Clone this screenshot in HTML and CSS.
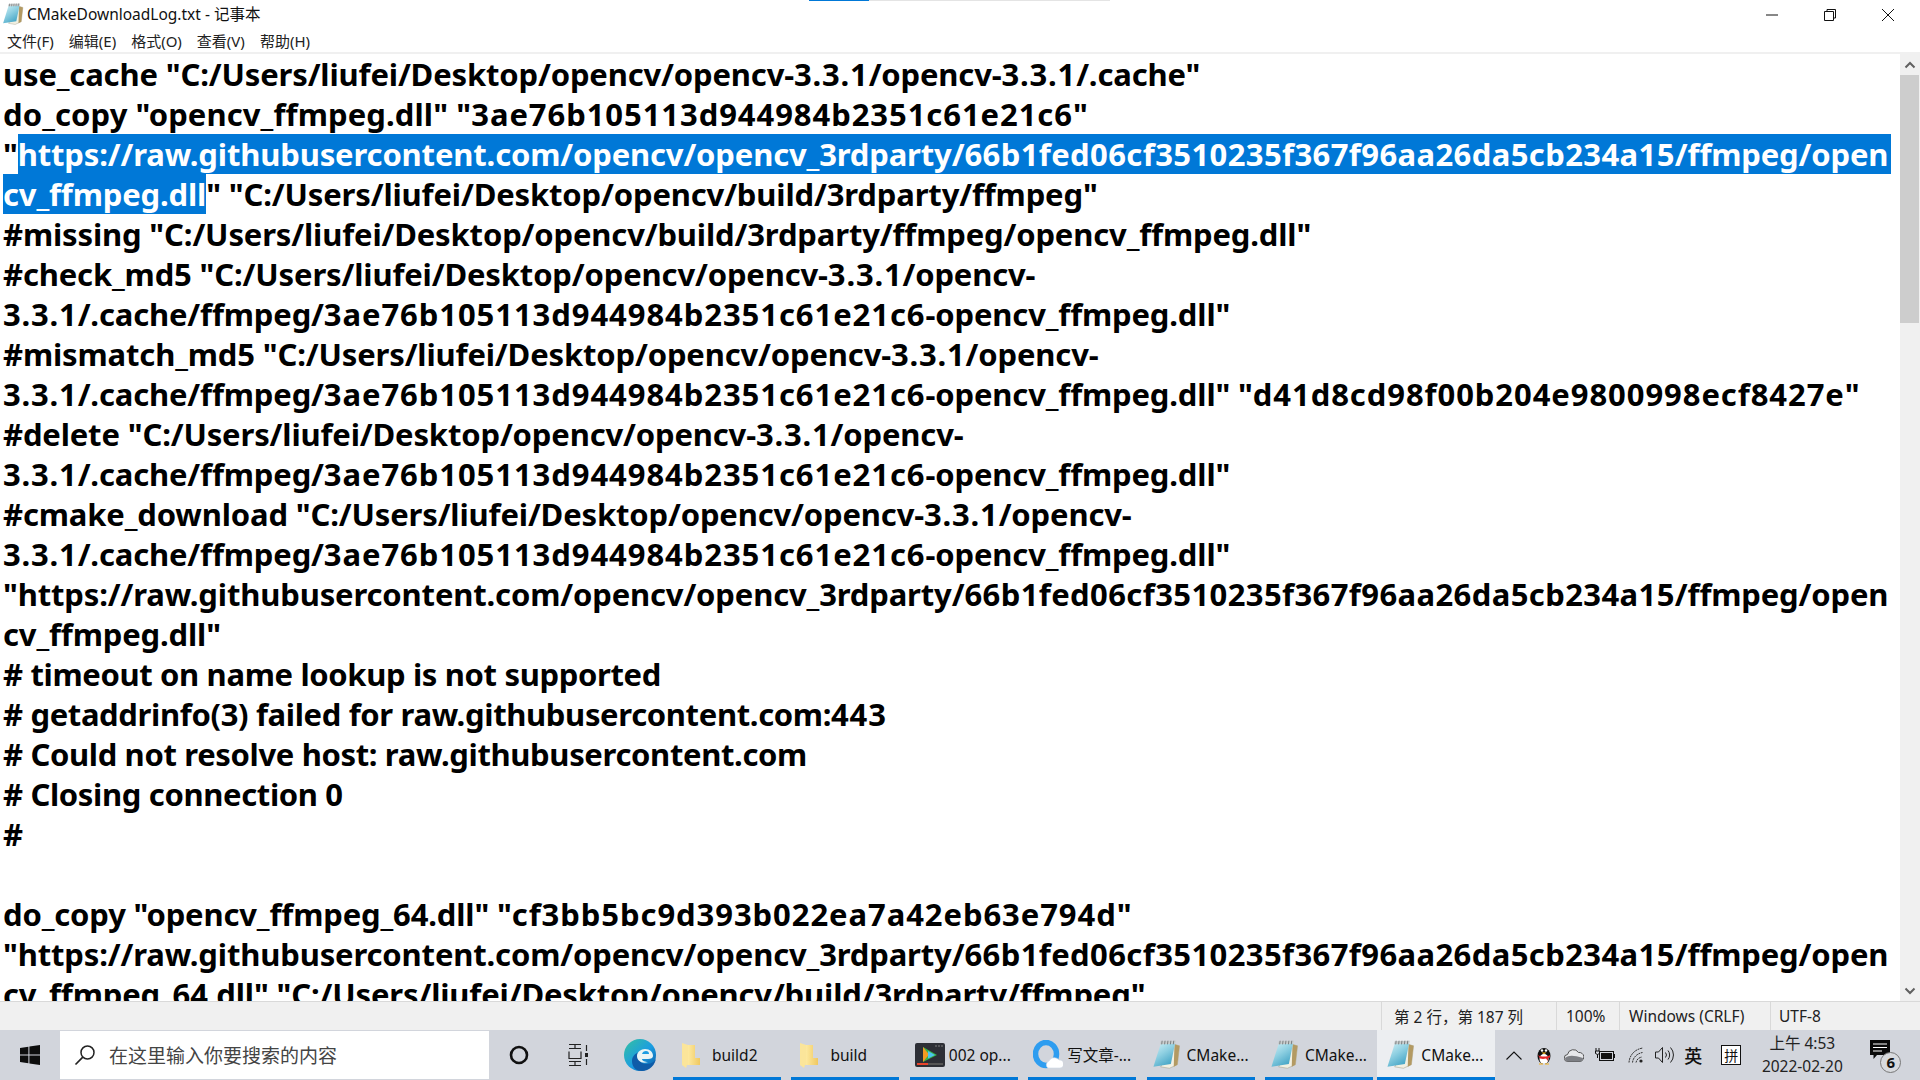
FILE: index.html
```html
<!DOCTYPE html>
<html lang="zh">
<head>
<meta charset="utf-8">
<title>CMakeDownloadLog.txt - 记事本</title>
<link rel="stylesheet" href="styles.css">
</head>
<body>
<div class="progress"><span class="progress-fill"></span></div>
<header class="titlebar">
  <svg class="app-icon" viewBox="0 0 20 20"><use href="#notepad"/></svg>
  <span class="title">CMakeDownloadLog.txt - 记事本</span>
  <div class="winctl">
    <svg width="14" height="14" viewBox="0 0 14 14"><path d="M1 7h12" stroke="#111" stroke-width="1"/></svg>
    <svg width="14" height="14" viewBox="0 0 14 14"><path d="M1.500 3.500h9v9h-9zM4 3.500V1.500h8.500v8.500h-2" fill="none" stroke="#111"/></svg>
    <svg width="14" height="14" viewBox="0 0 14 14"><path d="M1 1l12 12M13 1L1 13" stroke="#111" fill="none"/></svg>
  </div>
</header>
<nav class="menubar">
  <span>文件(F)</span><span>编辑(E)</span><span>格式(O)</span><span>查看(V)</span><span>帮助(H)</span>
</nav>
<main class="editor">
  <div class="text">
    <div class="line">use_cache "C:/Users/liufei/Desktop/opencv/opencv-<span class="ver">3.3.1</span>/opencv-<span class="ver">3.3.1</span>/.cache"</div>
    <div class="line line-wide">do_copy "opencv_ffmpeg.dll" "<span class="md5">3ae76b105113d944984b2351c61e21c6</span>"</div>
    <div class="line">"<span class="sel sel-wide">https://raw.githubusercontent.com/opencv/opencv_3rdparty/<span class="hash">66b1fed06cf3510235f367f96aa26da5cb234a15</span>/ffmpeg/open</span></div>
    <div class="line"><span class="sel">cv_ffmpeg.dll</span>" "C:/Users/liufei/Desktop/opencv/build/3rdparty/ffmpeg"</div>
    <div class="line">#missing "C:/Users/liufei/Desktop/opencv/build/3rdparty/ffmpeg/opencv_ffmpeg.dll"</div>
    <div class="line">#check_md5 "C:/Users/liufei/Desktop/opencv/opencv-<span class="ver">3.3.1</span>/opencv-</div>
    <div class="line"><span class="ver">3.3.1</span>/.cache/ffmpeg/<span class="md5">3ae76b105113d944984b2351c61e21c6</span>-opencv_ffmpeg.dll"</div>
    <div class="line">#mismatch_md5 "C:/Users/liufei/Desktop/opencv/opencv-<span class="ver">3.3.1</span>/opencv-</div>
    <div class="line"><span class="ver">3.3.1</span>/.cache/ffmpeg/<span class="md5">3ae76b105113d944984b2351c61e21c6</span>-opencv_ffmpeg.dll" "<span class="md5">d41d8cd98f00b204e9800998ecf8427e</span>"</div>
    <div class="line">#delete "C:/Users/liufei/Desktop/opencv/opencv-<span class="ver">3.3.1</span>/opencv-</div>
    <div class="line"><span class="ver">3.3.1</span>/.cache/ffmpeg/<span class="md5">3ae76b105113d944984b2351c61e21c6</span>-opencv_ffmpeg.dll"</div>
    <div class="line">#cmake_download "C:/Users/liufei/Desktop/opencv/opencv-<span class="ver">3.3.1</span>/opencv-</div>
    <div class="line"><span class="ver">3.3.1</span>/.cache/ffmpeg/<span class="md5">3ae76b105113d944984b2351c61e21c6</span>-opencv_ffmpeg.dll"</div>
    <div class="line">"https://raw.githubusercontent.com/opencv/opencv_3rdparty/<span class="hash">66b1fed06cf3510235f367f96aa26da5cb234a15</span>/ffmpeg/open</div>
    <div class="line">cv_ffmpeg.dll"</div>
    <div class="line line-plain"># timeout on name lookup is not supported</div>
    <div class="line line-plain"># getaddrinfo(3) failed for raw.githubusercontent.com:<span class="ver">443</span></div>
    <div class="line line-plain"># Could not resolve host: raw.githubusercontent.com</div>
    <div class="line line-plain"># Closing connection 0</div>
    <div class="line">#</div>
    <div class="line"></div>
    <div class="line">do_copy "opencv_ffmpeg_64.dll" "<span class="md5">cf3bb5bc9d393b022ea7a42eb63e794d</span>"</div>
    <div class="line">"https://raw.githubusercontent.com/opencv/opencv_3rdparty/<span class="hash">66b1fed06cf3510235f367f96aa26da5cb234a15</span>/ffmpeg/open</div>
    <div class="line">cv_ffmpeg_64.dll" "C:/Users/liufei/Desktop/opencv/build/3rdparty/ffmpeg"</div>
  </div>
  <aside class="scrollbar">
    <div class="sb-btn"><svg width="12" height="8" viewBox="0 0 12 8"><path d="M1.500 6.500L6 2l4.500 4.500" fill="none" stroke="#606060" stroke-width="2"/></svg></div>
    <div class="sb-thumb"></div>
    <div class="sb-track"></div>
    <div class="sb-btn"><svg width="12" height="8" viewBox="0 0 12 8"><path d="M1.500 1.500L6 6l4.500-4.500" fill="none" stroke="#606060" stroke-width="2"/></svg></div>
  </aside>
</main>
<footer class="statusbar">
  <span class="st st-pos">第 2 行，第 187 列</span>
  <span class="st st-zoom">100%</span>
  <span class="st st-eol">Windows (CRLF)</span>
  <span class="st st-enc">UTF-8</span>
</footer>
<div class="taskbar">
  <div class="start">
    <svg width="20" height="20" viewBox="0 0 20 20"><path d="M0 3l8.400-1.200v7.700H0zM9.400 1.600L20 0v9.500H9.400zM0 10.500h8.400v7.700L0 17zM9.400 10.500H20V20L9.400 18.400z" fill="#0d0d0d"/></svg>
  </div>
  <div class="search">
    <svg width="22" height="22" viewBox="0 0 22 22"><circle cx="13.500" cy="8.500" r="6.500" fill="none" stroke="#222" stroke-width="1.500"/><path d="M8.800 13.200L1.500 20.500" stroke="#222" stroke-width="1.700"/></svg>
    <span>在这里输入你要搜索的内容</span>
  </div>
  <div class="tool"><svg width="20" height="20" viewBox="0 0 20 20"><circle cx="10" cy="10" r="8" fill="none" stroke="#111" stroke-width="2.600"/></svg></div>
  <div class="tool"><svg width="22" height="22" viewBox="0 0 22 22"><path d="M1 .5h12M7 .5v4M1 4.500h12M1 7.500v7h12v-7M1 17.500h12M7 17.500v4M1 21.500h12M18.500 1v6M18.500 15v6" fill="none" stroke="#222" stroke-width="1.200"/><rect x="17" y="9" width="3" height="4" fill="#222"/></svg></div>
  <div class="tool tool-edge">
    <svg width="34" height="34" viewBox="0 0 34 34">
      <defs><linearGradient id="eg" x1="0" y1="0" x2="1" y2="1"><stop offset="0" stop-color="#35c1a0"/><stop offset=".55" stop-color="#1b9de2"/><stop offset="1" stop-color="#0c59a4"/></linearGradient></defs>
      <circle cx="17" cy="17" r="16" fill="url(#eg)"/>
      <path d="M33 19c0 8-7 14-14 14-5 0-10-3-10-10 0-6 6-10 12-9-3 1-5 3-5 6 0 4 4 6 8 6 5 0 9-3 9-7z" fill="#0f5ca8"/>
      <path d="M14 18c0-4 4-7 8-7 5 0 8 3 8 7 0 2-2 3-5 3h-6c0 2 3 3 6 3-6 2-11-1-11-6z" fill="#e9f5f5"/>
      <path d="M19 16c.500-2 2-3 4-3s3 1 3 3z" fill="#1b9de2"/>
    </svg>
  </div>
  <div class="tasks">
    <div class="task"><svg class="ic-folder" viewBox="0 0 18 26"><use href="#folder"/></svg><span>build2</span></div>
    <div class="task"><svg class="ic-folder" viewBox="0 0 18 26"><use href="#folder"/></svg><span>build</span></div>
    <div class="task task-tight">
      <svg class="ic-video" viewBox="0 0 30 24">
        <rect width="30" height="24" rx="2" fill="#2d2f36"/>
        <circle cx="21" cy="3" r=".8" fill="#888"/><circle cx="24" cy="3" r=".8" fill="#888"/><circle cx="27" cy="3" r=".8" fill="#888"/>
        <path d="M8 4l14 8-14 7z" fill="#37b44a"/><path d="M8 4l6 7.500L8 19z" fill="#f49a20"/><path d="M13 8l7 4-7 3.500z" fill="#4cc4ee"/>
        <rect x="2" y="20" width="26" height="2" fill="#555"/><rect x="2" y="20" width="11" height="2" fill="#e8442c"/>
      </svg><span>002 op...</span>
    </div>
    <div class="task task-tight">
      <svg class="ic-browser" viewBox="0 0 30 30">
        <ellipse cx="13" cy="14" rx="10.500" ry="11.500" fill="none" stroke="#2e9df0" stroke-width="5.500"/>
        <path d="M15 28a4 4 0 0 1 1-7 6 6 0 0 1 10-1 4 4 0 0 1 1 8z" fill="#fff" stroke="#cfd8e6" stroke-width=".6"/>
      </svg><span class="tight-label">写文章-...</span>
    </div>
    <div class="task"><svg class="ic-notepad" viewBox="0 0 20 20"><use href="#notepad"/></svg><span>CMake...</span></div>
    <div class="task"><svg class="ic-notepad" viewBox="0 0 20 20"><use href="#notepad"/></svg><span>CMake...</span></div>
    <div class="task task-active"><svg class="ic-notepad" viewBox="0 0 20 20"><use href="#notepad"/></svg><span>CMake...</span></div>
  </div>
  <div class="tray">
    <svg class="t-chev" width="16" height="9" viewBox="0 0 16 9"><path d="M.5 8.500L8 1l7.500 7.500" fill="none" stroke="#111" stroke-width="1.100"/></svg>
    <svg class="t-qq" width="16" height="20" viewBox="0 0 16 20">
      <ellipse cx="8" cy="11" rx="6.500" ry="8" fill="#111"/><ellipse cx="8" cy="14" rx="4.500" ry="5" fill="#fff"/>
      <path d="M2 10c3 2 9 2 12 0v2.500l-2 .5v3l-2-2.500c-2 .5-4 .5-6 0z" fill="#e3262a"/>
      <circle cx="6" cy="5.500" r="1.200" fill="#fff"/><circle cx="10" cy="5.500" r="1.200" fill="#fff"/>
      <path d="M5.500 7.500h5L8 9.200z" fill="#f6b21b"/><path d="M3 18.500h4v1H3zM9 18.500h4v1H9z" fill="#f6b21b"/>
    </svg>
    <svg class="t-cloud" width="20" height="14" viewBox="0 0 20 14"><path d="M4 13.500a3.500 3.500 0 0 1-.5-7 6 6 0 0 1 11-2 4.500 4.500 0 0 1 1.500 9z" fill="#e6e7ea" stroke="#555"/><path d="M1 10c4-3 8-3 18 0 0 2-1 3.500-3 3.500H4C2 13.500 1 12 1 10z" fill="#7d7f84"/></svg>
    <svg class="t-batt" width="20" height="16" viewBox="0 0 20 16"><path d="M1 1v3M4 1v3M.5 4h4v2.500l-2 1-2-1zM2.500 7.500V11" fill="none" stroke="#111"/><rect x="4.500" y="4.500" width="14" height="9" fill="none" stroke="#111"/><rect x="6" y="6" width="11" height="6" fill="#111"/><rect x="19" y="7" width="1" height="4" fill="#111"/></svg>
    <svg class="t-wifi" width="16" height="16" viewBox="0 0 16 16"><path d="M1 15.500C1.500 8 7 2 15 1M4.500 15.500c.500-5 4.500-9 10-10M8 15.500c.500-2.500 2.500-5 6-5.500" fill="none" stroke="#333" stroke-dasharray="2 .7"/><circle cx="13" cy="14" r="1.600" fill="#222"/></svg>
    <svg class="t-vol" width="20" height="18" viewBox="0 0 20 18"><path d="M.5 6h3l4-4.500v15l-4-4.500h-3z" fill="none" stroke="#222"/><path d="M10.500 6.500a4 4 0 0 1 0 5M13 4.500a7 7 0 0 1 0 9M15.500 1.500a11 11 0 0 1 0 15" fill="none" stroke="#222"/></svg>
    <span class="t-ime">英</span>
    <span class="t-pin">拼</span>
    <div class="clock"><span>上午 4:53</span><span>2022-02-20</span></div>
    <div class="notify">
      <svg width="20" height="19" viewBox="0 0 20 19"><path d="M0 0h20v15H7l-3.500 4v-4H0z" fill="#0a0a0a"/><path d="M3 4h14M3 7.500h14M3 11h9" stroke="#fff"/></svg>
      <span class="badge">6</span>
    </div>
  </div>
</div>
<svg class="defs" width="0" height="0">
  <defs>
    <linearGradient id="pad" x1="0" y1="0" x2=".6" y2="1"><stop offset="0" stop-color="#d5f1f6"/><stop offset=".5" stop-color="#8fd0e2"/><stop offset="1" stop-color="#45a5c6"/></linearGradient>
    <linearGradient id="fold" x1="0" y1="0" x2="1" y2="0"><stop offset="0" stop-color="#fde9a0"/><stop offset="1" stop-color="#f0c860"/></linearGradient>
    <symbol id="notepad" viewBox="0 0 20 20">
      <path d="M15 3l4 1-1.500 13-5.500 2.500-6-1z" fill="#f2f0e2" stroke="#a9a592" stroke-width=".4"/>
      <path d="M15.500 3l3.500 1-1.500 13-2.500 1.500z" fill="#b39a63"/>
      <path d="M6 2.500L16 2l-3 14.500L1 18.500z" fill="url(#pad)"/>
      <path d="M6 .8L16.500 .5 16 2.600 5.500 3z" fill="#c9cdcd"/>
      <path d="M7 .5l-.3 2.500M9 .5l-.3 2.500M11 .5l-.3 2.500M13 .5l-.3 2.500M15 .5l-.3 2.500" stroke="#6f7477" stroke-width=".6"/>
    </symbol>
    <symbol id="folder" viewBox="0 0 18 26">
      <path d="M0 1l6 2h5v20H5l-1 3-4-3z" fill="#fbe59a"/>
      <path d="M6 3h7v13h5v7H6z" fill="url(#fold)"/>
    </symbol>
  </defs>
</svg>
</body>
</html>
```
FILE: styles.css
```css
* { box-sizing: border-box; }
html, body { margin: 0; height: 100%; }
body {
  position: relative;
  display: flex;
  flex-direction: column;
  height: 1080px;
  width: 1920px;
  overflow: hidden;
  background: #fff;
  color: #000;
  font-family: "Noto Sans", "Noto Sans CJK SC", sans-serif;
}
.progress { position: absolute; top: 0; left: 809px; width: 301px; height: 1px; background: #e4e4e4; }
.progress-fill { display: block; width: 60px; height: 1px; background: #0078d7; }
.titlebar { height: 30px; display: flex; align-items: center; flex: none; padding: 0 0 3px 2px; }
.app-icon { width: 22px; height: 22px; flex: none; }
.title { margin-left: 3px; font-size: 15.500px; color: #111; }
.winctl { margin-left: auto; display: flex; align-items: center; gap: 44px; padding: 3px 25px 0 0; }
.menubar { height: 24px; flex: none; display: flex; align-items: center; padding: 0 0 2px 7px; gap: 15px; font-size: 15px; color: #222; border-bottom: 2px solid #f0f0f0; }
.editor { flex: 1; min-height: 0; display: flex; }
.text { flex: 1; min-width: 0; overflow: hidden; padding-left: 3px; font-size: 31px; font-weight: 700; letter-spacing: -0.150px; }
.line { height: 40px; line-height: 40px; white-space: pre; }
.line-plain { letter-spacing: -0.350px; }
.line-wide { letter-spacing: 0.100px; }
.ver { letter-spacing: 0.800px; }
.md5 { letter-spacing: 0.930px; }
.hash { letter-spacing: 0.400px; }
.sel { display: inline-block; height: 40px; background: #0078d7; color: #fff; }
.sel-wide { width: 1873px; }
.scrollbar { width: 20px; flex: none; display: flex; flex-direction: column; background: #f0f0f0; }
.sb-btn { height: 21px; flex: none; display: flex; align-items: center; justify-content: center; }
.sb-thumb { height: 248px; flex: none; margin-right: 1px; background: #cdcdcd; }
.sb-track { flex: 1; }
.statusbar { height: 29px; flex: none; display: flex; align-items: center; padding-left: 1381px; background: #f0f0f0; border-top: 1px solid #d9d9d9; font-size: 15.500px; color: #222; }
.st { height: 100%; display: flex; align-items: center; border-left: 1px solid #d9d9d9; }
.st-pos { width: 175px; padding-left: 12px; }
.st-zoom { width: 63px; padding-left: 9px; }
.st-eol { width: 151px; padding-left: 9px; }
.st-enc { padding-left: 8px; }
.taskbar { height: 50px; flex: none; display: flex; align-items: stretch; background: #d2d5dc; font-size: 15.500px; color: #111; }
.start { width: 60px; display: flex; align-items: center; justify-content: center; }
.search { width: 429px; margin: 1px 0; display: flex; align-items: center; gap: 13px; padding-left: 14px; background: #fff; font-size: 19px; color: #444; }
.tool { width: 60px; display: flex; align-items: center; justify-content: center; }
.tool-edge { width: 63px; padding-right: 2px; }
.tasks { margin-left: 1px; display: flex; gap: 10.400px; }
.task { width: 108px; height: 50px; display: flex; align-items: center; gap: 7px; padding: 2px 0 0 5px; border-bottom: 3px solid #0078d7; white-space: nowrap; }
.task-tight { gap: 4px; }
.task-active { width: 118px; margin-left: -6px; padding-left: 9px; background: #eceef1; }
.ic-folder { width: 18px; height: 26px; margin: 0 5px 0 4px; flex: none; }
.ic-video { width: 30px; height: 24px; flex: none; }
.ic-browser { width: 30px; height: 30px; flex: none; }
.ic-notepad { width: 29px; height: 29px; flex: none; margin-right: -1px; }
.tray { position: relative; flex: 1; display: flex; align-items: center; padding-left: 11px; }
.t-chev { margin-right: 14px; }
.t-qq { margin-right: 12px; }
.t-cloud { margin-right: 11px; }
.t-batt { margin-right: 13px; }
.t-wifi { margin-right: 11px; }
.t-vol { margin-right: 9px; }
.t-ime { width: 18px; font-size: 18px; font-weight: 500; margin-right: 19px; font-family: "Noto Sans CJK SC", sans-serif; }
.t-pin { width: 20px; height: 20px; background: #fff; border: 1px solid #111; font-size: 14px; line-height: 18px; text-align: center; font-family: "Noto Sans CJK SC", sans-serif; }
.clock { width: 106px; margin-left: 8px; display: flex; flex-direction: column; align-items: center; gap: 2px; font-size: 15.500px; line-height: 21px; color: #222; }
.notify { position: relative; margin-left: 15px; height: 36px; width: 31px; padding-top: 3px; }
.badge { position: absolute; right: 0; bottom: 0; width: 21px; height: 21px; border-radius: 50%; border: 1px solid #777; background: #d8dade; text-align: center; font-size: 15px; font-weight: 700; line-height: 19px; }
.defs { position: absolute; }
```
